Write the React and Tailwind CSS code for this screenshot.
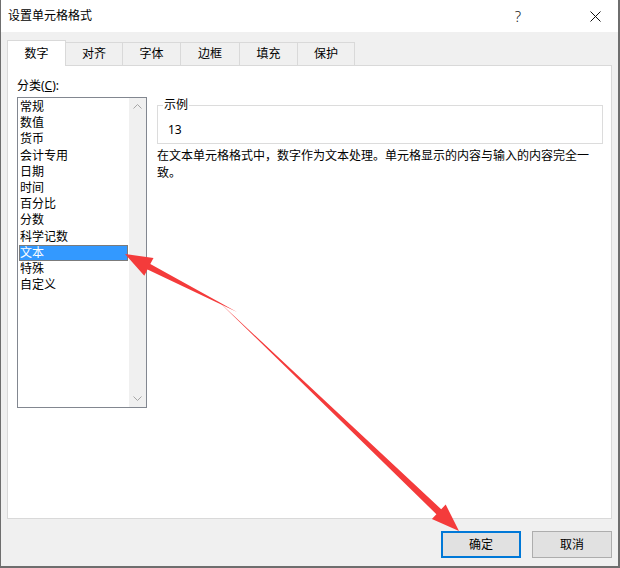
import React from "react";

const categories = [
  "常规",
  "数值",
  "货币",
  "会计专用",
  "日期",
  "时间",
  "百分比",
  "分数",
  "科学记数",
  "文本",
  "特殊",
  "自定义",
];

const tabs = [
  { label: "数字", w: "w-[59px]" },
  { label: "对齐", w: "w-[57px]" },
  { label: "字体", w: "w-[58px]" },
  { label: "边框", w: "w-[59px]" },
  { label: "填充", w: "w-[58px]" },
  { label: "保护", w: "w-[57px]" },
];

function Chevron({ up }) {
  return (
    <svg width="17" height="17" viewBox="0 0 17 17">
      <polyline
        points={up ? "4.5,10.5 8.5,6.5 12.5,10.5" : "4.5,6.5 8.5,10.5 12.5,6.5"}
        fill="none"
        stroke="#a6a6a6"
        strokeWidth="1"
      />
    </svg>
  );
}

export default function App() {
  const selected = "文本";

  return (
    <div className="relative w-[620px] h-[568px] bg-[#f0f0f0] border-l border-r-2 border-b-2 border-[#6e6e6e] flex flex-col text-[12px] text-black font-['Noto_Sans','Noto_Sans_CJK_SC',sans-serif]">
      {/* title bar */}
      <div className="h-[32px] bg-white flex items-center justify-between">
        <span className="pl-[7px] leading-[16px]">设置单元格格式</span>
        <div className="flex h-full gap-[31px]">
          <div className="w-[46px] flex items-center justify-center text-[15px] font-light text-[#222]">?</div>
          <div className="w-[46px] flex items-center justify-center">
            <svg width="11" height="11" viewBox="0 0 11 11">
              <path d="M0.5 0.5 L10.5 10.5 M10.5 0.5 L0.5 10.5" stroke="#111" strokeWidth="1" />
            </svg>
          </div>
        </div>
      </div>

      {/* body */}
      <div className="flex-1 flex flex-col px-[6px] pt-[8px]">
        <div className="h-[25px] flex items-end">
          {tabs.map((t, i) =>
            i === 0 ? (
              <div
                key={t.label}
                className={`${t.w} h-[26px] -mb-px relative z-10 bg-white border border-b-0 border-[#d9d9d9] flex items-center justify-center leading-[16px]`}
              >
                {t.label}
              </div>
            ) : (
              <div
                key={t.label}
                className={`${t.w} h-[23px] bg-[#f0f0f0] border border-l-0 border-b-0 border-[#d9d9d9] flex items-center justify-center leading-[16px]`}
              >
                {t.label}
              </div>
            )
          )}
        </div>

        <div className="h-[454px] bg-white border border-[#d9d9d9] pl-[9px] pt-[12px]">
          <div className="leading-[16px]">
            分类(<span className="underline">C</span>):
          </div>
          <div className="flex mt-[3px]">
            {/* list box */}
            <div className="w-[130px] h-[311px] border border-[#828790] flex">
              <div className="flex-1 flex flex-col pt-[1px]">
                {categories.map((c) => (
                  <div
                    key={c}
                    className={
                      c === selected
                        ? "h-[16.2px] mx-[1px] border border-[#7b7b7b] bg-[#3399ff] text-white flex items-center leading-[14px]"
                        : "h-[16.2px] mx-[1px] border border-transparent flex items-center leading-[14px]"
                    }
                  >
                    {c}
                  </div>
                ))}
              </div>
              <div className="w-[17px] bg-[#f0f0f0] flex flex-col justify-between">
                <Chevron up />
                <Chevron />
              </div>
            </div>

            {/* right side */}
            <div className="ml-[10px] w-[446px]">
              <fieldset className="border border-[#dcdcdc] px-[5px] pb-[5px]">
                <legend className="px-[1px] leading-[16px]">示例</legend>
                <div className="pl-[5px] mt-[9px] leading-[16px]">13</div>
              </fieldset>
              <p className="mt-[4px] leading-[16.5px]">
                在文本单元格格式中，数字作为文本处理。单元格显示的内容与输入的内容完全一
                <br />
                致。
              </p>
            </div>
          </div>
        </div>

        <div className="flex justify-end gap-[11px] mt-[12px]">
          <button className="w-[80px] h-[27px] bg-[#e1e1e1] border-2 border-[#0078d7] leading-[16px]">确定</button>
          <button className="w-[80px] h-[27px] bg-[#e1e1e1] border border-[#adadad] leading-[16px]">取消</button>
        </div>
      </div>

      {/* red annotation arrows */}
      <svg className="absolute inset-0 pointer-events-none" width="620" height="568" viewBox="0 0 620 568">
        <polygon
          points="236,312 149.3,264.1 152.5,257.9 124,254 143.3,275.7 146.5,269.5"
          fill="#f43b3b"
        />
        <polygon
          points="216,300 435.4,514.2 430.9,518.9 458,531 444.7,504.5 440.2,509.2"
          fill="#f43b3b"
        />
      </svg>
    </div>
  );
}
